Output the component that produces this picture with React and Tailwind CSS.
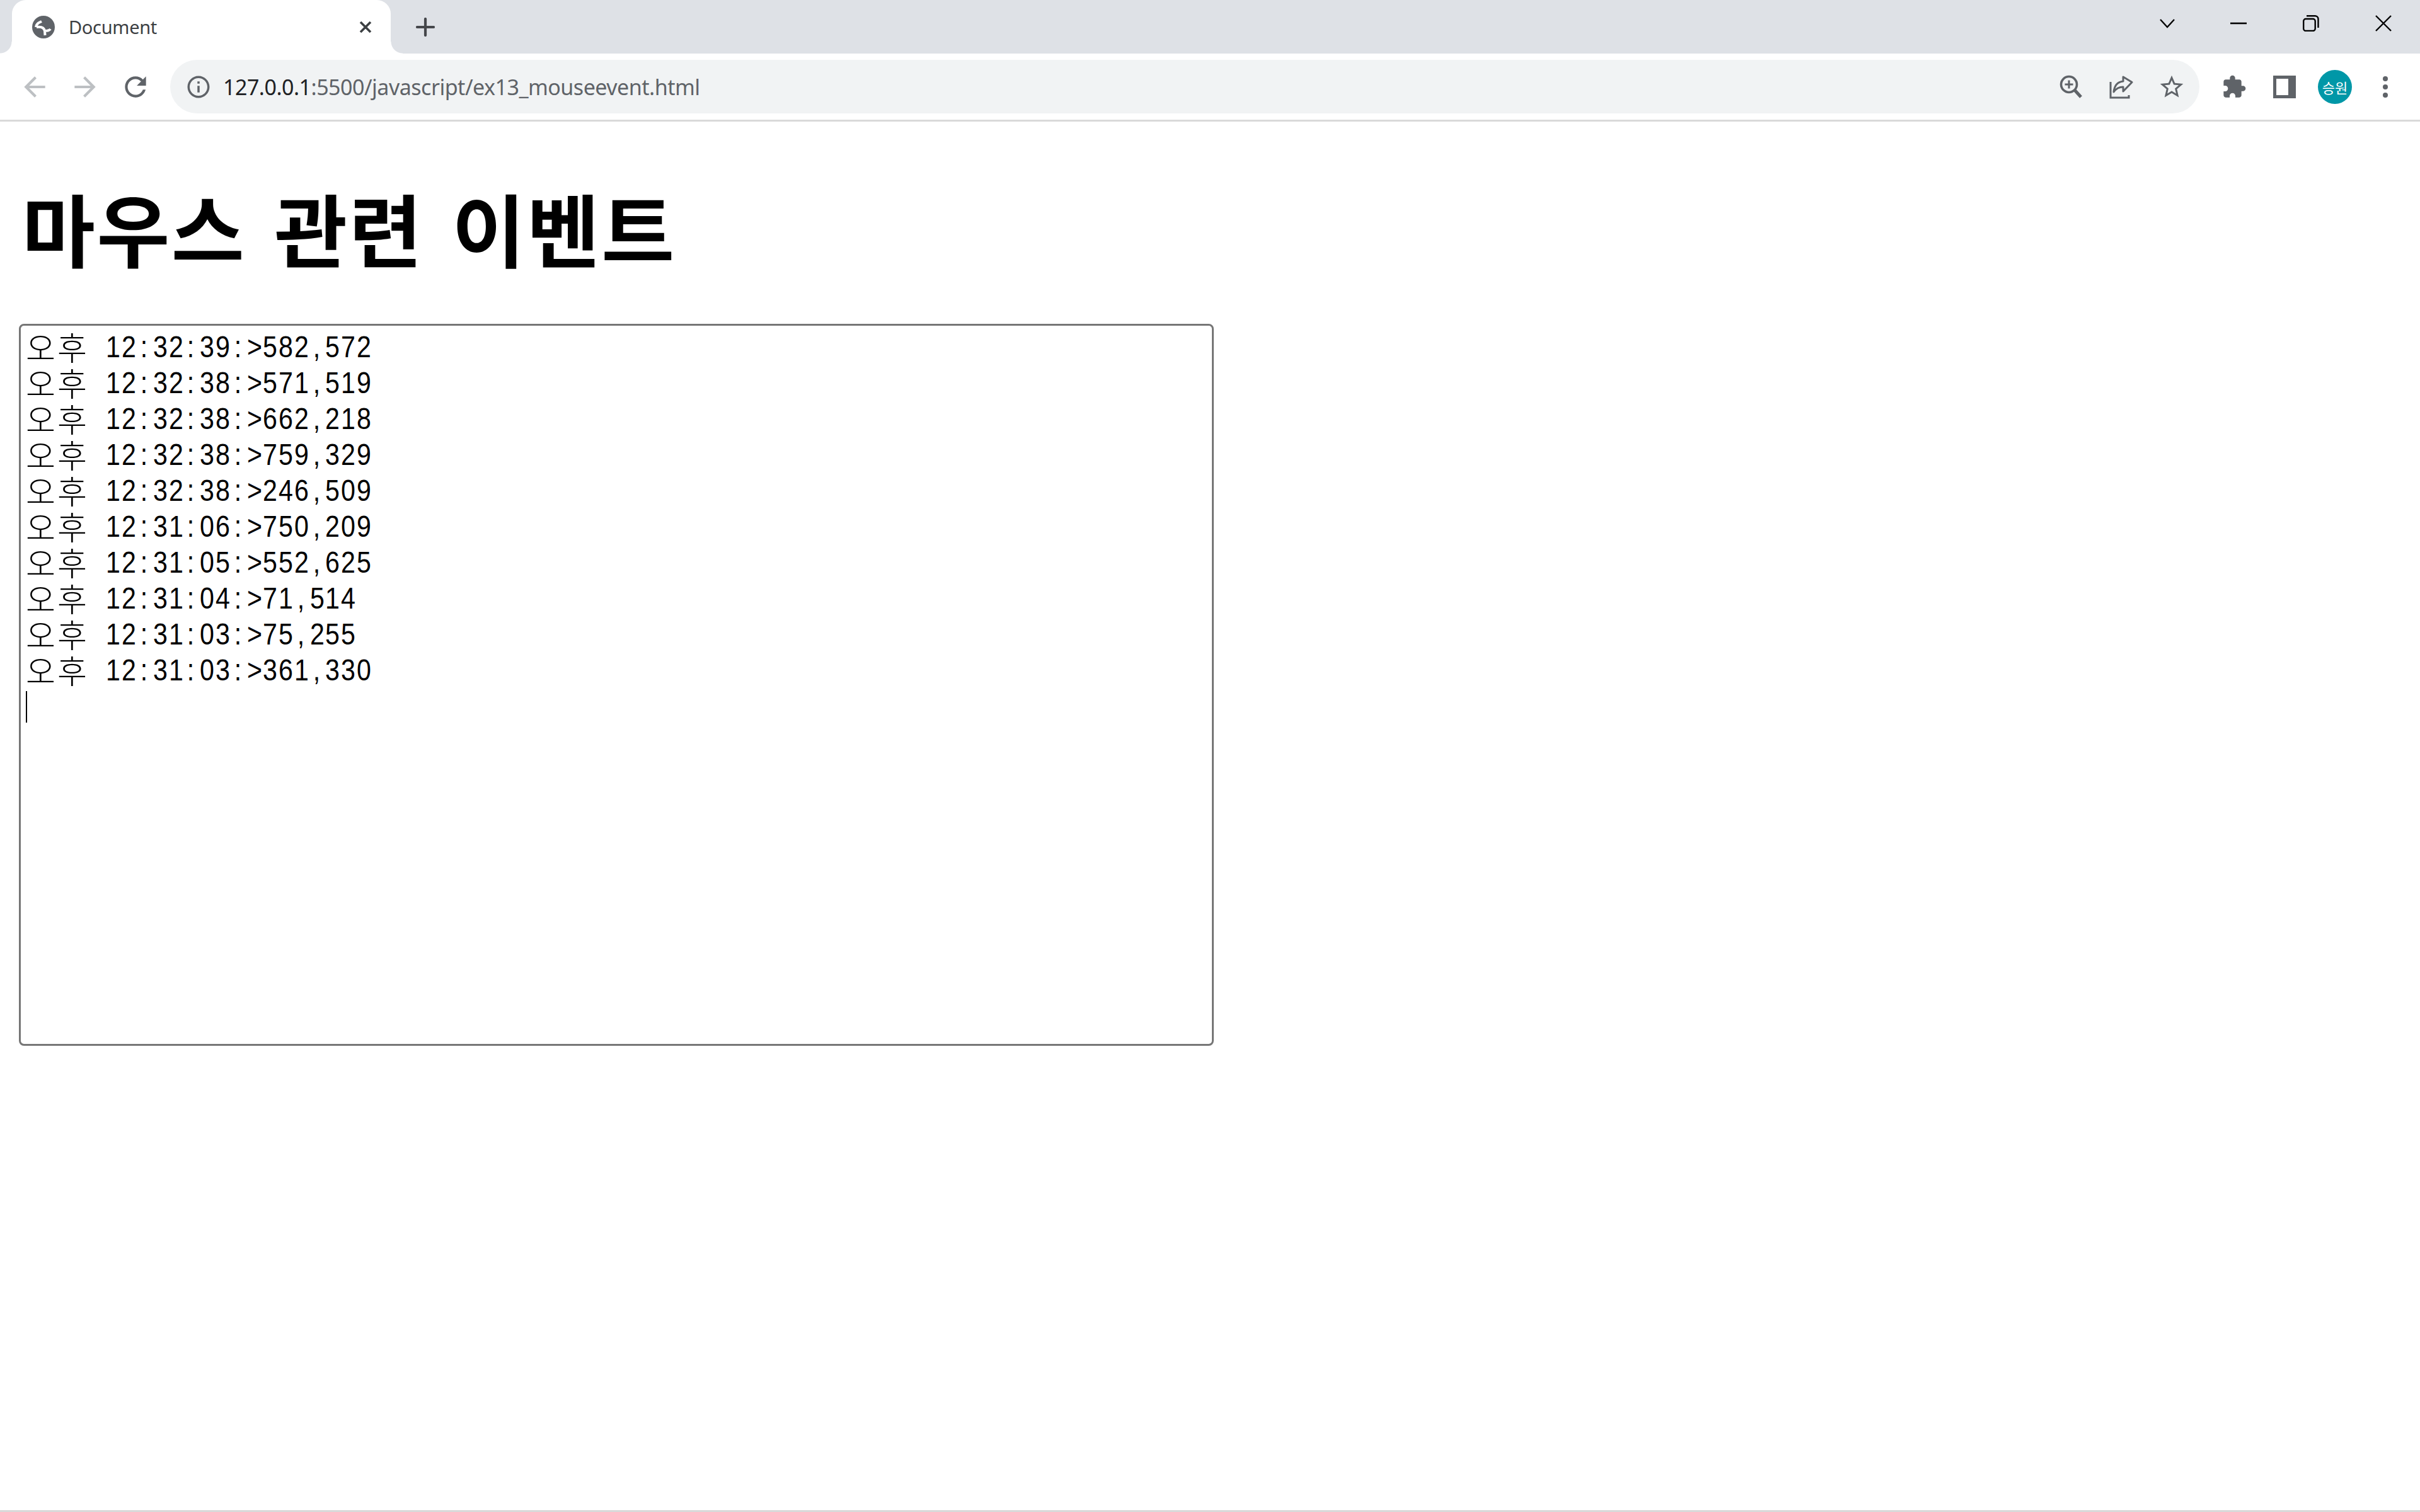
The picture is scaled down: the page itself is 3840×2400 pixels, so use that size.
const ic = {
  back: "M20 11H7.83l5.59-5.59L12 4l-8 8 8 8 1.41-1.41L7.83 13H20v-2z",
  forward: "M12 4l-1.41 1.41L16.17 11H4v2h12.17l-5.58 5.59L12 20l8-8z",
  reload: "M17.65 6.35C16.2 4.9 14.21 4 12 4c-4.42 0-7.99 3.58-7.99 8s3.57 8 7.99 8c3.73 0 6.84-2.55 7.73-6h-2.08c-.82 2.33-3.04 4-5.65 4-3.31 0-6-2.69-6-6s2.69-6 6-6c1.66 0 3.14.69 4.22 1.78L13 11h7V4l-2.35 2.35z",
  info: "M11 7h2v2h-2zm0 4h2v6h-2zm1-9C6.48 2 2 6.48 2 12s4.48 10 10 10 10-4.48 10-10S17.52 2 12 2zm0 18c-4.41 0-8-3.59-8-8s3.59-8 8-8 8 3.59 8 8-3.59 8-8 8z",
  star: "M22 9.24l-7.19-.62L12 2 9.19 8.63 2 9.24l5.46 4.73L5.82 21 12 17.27 18.18 21l-1.63-7.03L22 9.24zM12 15.4l-3.76 2.27 1-4.28-3.32-2.88 4.38-.38L12 6.1l1.71 4.04 4.38.38-3.32 2.88 1 4.28L12 15.4z",
  puzzle: "M20.5 11H19V7c0-1.1-.9-2-2-2h-4V3.5C13 2.12 11.88 1 10.5 1S8 2.12 8 3.5V5H4c-1.1 0-1.99.9-1.99 2v3.8H3.5c1.49 0 2.7 1.21 2.7 2.7s-1.21 2.7-2.7 2.7H2V20c0 1.1.9 2 2 2h3.8v-1.5c0-1.49 1.21-2.7 2.7-2.7 1.49 0 2.7 1.21 2.7 2.7V22H17c1.1 0 2-.9 2-2v-4h1.5c1.38 0 2.5-1.12 2.5-2.5S21.88 11 20.5 11z",
};

function Fill({ d, className }) {
  return (
    <svg viewBox="0 0 24 24" className={className} fill="currentColor">
      <path d={d} />
    </svg>
  );
}

const lines = [
  "12:32:39:>582,572",
  "12:32:38:>571,519",
  "12:32:38:>662,218",
  "12:32:38:>759,329",
  "12:32:38:>246,509",
  "12:31:06:>750,209",
  "12:31:05:>552,625",
  "12:31:04:>71,514",
  "12:31:03:>75,255",
  "12:31:03:>361,330",
];

export default function App() {
  return (
    <div className="w-[3840px] h-[2400px] flex flex-col bg-white font-['Noto_Sans',sans-serif] overflow-hidden">
      {/* tab strip */}
      <div className="relative h-[85px] shrink-0 flex bg-[#dee1e6] pl-[19px]">
        <div className="relative w-[601px] h-full bg-white rounded-t-[22px] flex items-center pl-[32px] pr-[30px]">
          <div className="absolute left-[-19px] bottom-0 w-[19px] h-[19px] bg-[radial-gradient(circle_at_0_0,#dee1e6_18px,#ffffff_19px)]" />
          <div className="absolute right-[-19px] bottom-0 w-[19px] h-[19px] bg-[radial-gradient(circle_at_100%_0,#dee1e6_18px,#ffffff_19px)]" />
          <svg viewBox="0 0 36 36" className="w-[36px] h-[36px]">
            <circle cx="18" cy="18" r="18" fill="#5f6368" />
            <path d="M6 18C7 12 11 11 15 9M7 18c7-1 12 1 13 6l.5 7M20 24c4 0 7 0 9-3" fill="none" stroke="#ffffff" strokeWidth="4" />
          </svg>
          <span className="ml-[22px] text-[29px] text-[#3c4043] leading-none tracking-[-0.3px]">Document</span>
          <svg viewBox="0 0 20 20" className="ml-auto w-[20px] h-[20px] text-[#3c4043]" fill="none" stroke="currentColor" strokeWidth="3.6">
            <path d="M2 2l16 16M18 2L2 18" />
          </svg>
        </div>
        <svg viewBox="0 0 30 30" className="ml-[40px] self-center w-[30px] h-[30px] text-[#45474b]" fill="none" stroke="currentColor" strokeWidth="4.2" strokeLinecap="round">
          <path d="M15 2v26M2 15h26" />
        </svg>
        <div className="ml-auto flex items-center pb-[11px] pr-[45px] text-black">
          <svg viewBox="0 0 24 16" className="w-[24px] h-[16px]" fill="none" stroke="currentColor" strokeWidth="2.4">
            <path d="M1 2l11 12L23 2" />
          </svg>
          <svg viewBox="0 0 26 4" className="ml-[88px] w-[26px] h-[4px]" fill="currentColor">
            <rect width="26" height="2.6" y="0.7" />
          </svg>
          <svg viewBox="0 0 26 26" className="ml-[89px] w-[26px] h-[26px]" fill="none" stroke="currentColor" strokeWidth="2.4">
            <rect x="1.2" y="6" width="18.5" height="19" rx="3.5" />
            <path d="M6 1.2h13.5a5 5 0 0 1 5 5V20" />
          </svg>
          <svg viewBox="0 0 26 26" className="ml-[89px] w-[26px] h-[26px]" fill="none" stroke="currentColor" strokeWidth="2.4">
            <path d="M1 1l24 24M25 1L1 25" />
          </svg>
        </div>
      </div>

      {/* toolbar */}
      <div className="h-[108px] shrink-0 flex items-start bg-white border-b-[3px] border-[#d9d9d9] pt-[10px] pl-[30px] pr-[350px]">
        <div className="h-[85px] flex items-center shrink-0">
          <Fill d={ic.back} className="w-[50px] h-[50px] text-[#bdc0c3]" />
          <Fill d={ic.forward} className="ml-[30px] w-[50px] h-[50px] text-[#bdc0c3]" />
          <Fill d={ic.reload} className="ml-[30px] w-[50px] h-[50px] text-[#5f6368]" />
        </div>
        <div className="ml-[30px] flex-1 h-[85px] rounded-full bg-[#f1f3f4] flex items-center pl-[24px] pr-[22px]">
          <Fill d={ic.info} className="w-[42px] h-[42px] text-[#5f6368]" />
          <span className="ml-[18px] text-[34px] leading-none tracking-[-0.5px] text-[#5f6368]">
            <span className="text-[#202124]">127.0.0.1</span>:5500/javascript/ex13_mouseevent.html
          </span>
          <svg viewBox="0 0 44 44" className="ml-auto w-[44px] h-[44px] text-[#5f6368]" fill="none" stroke="currentColor" strokeWidth="3.6">
            <circle cx="19" cy="18" r="12.5" />
            <path d="M19 11.5v13M12.5 18h13" strokeWidth="3" />
            <path d="M28 27l10 11" strokeWidth="5" />
          </svg>
          <svg viewBox="0 0 44 44" className="ml-[36px] w-[44px] h-[44px] text-[#5f6368]" fill="none" stroke="currentColor" strokeWidth="3">
            <path d="M5 14v25h29v-4" />
            <path d="M25 6v7c-9 1-14 7-15 17 4-6 9-8 15-8v7l14-14.500z" strokeLinejoin="round" />
          </svg>
          <Fill d={ic.star} className="ml-[36px] w-[44px] h-[44px] text-[#5f6368]" />
        </div>
        <div className="absolute left-[3525px] h-[85px] flex items-center">
          <Fill d={ic.puzzle} className="w-[40px] h-[40px] text-[#5f6368]" />
          <svg viewBox="0 0 36 36" className="ml-[42px] w-[36px] h-[36px]">
            <path d="M0 0h36v36H0zM5 5v26h19V5z" fill="#5f6368" fillRule="evenodd" />
          </svg>
          <div className="ml-[35px] w-[54px] h-[54px] rounded-full bg-[#0097a7] flex items-center justify-center text-white text-[22px] leading-none font-['Noto_Sans_CJK_KR',sans-serif]">
            승원
          </div>
          <svg viewBox="0 0 10 36" className="ml-[48px] w-[10px] h-[36px]" fill="#5f6368">
            <circle cx="5" cy="5" r="4" />
            <circle cx="5" cy="18" r="4" />
            <circle cx="5" cy="31" r="4" />
          </svg>
        </div>
      </div>

      {/* page */}
      <div className="flex-1 flex flex-col bg-white border-b-[3px] border-[#d9d9d9] pl-[30px]">
        <h1 className="mt-[87px] pl-[5px] text-[126px] leading-[160px] font-bold text-black tracking-[2.5px] [word-spacing:14px] font-['Noto_Sans_CJK_KR',sans-serif]">
          마우스 관련 이벤트
        </h1>
        <div className="mt-[74px] w-[1896px] h-[1146px] border-[3px] border-[#767676] rounded-[8px] pt-[3px] pl-[8px] text-black">
          {lines.map((t) => (
            <div key={t} className="h-[57px] leading-[57px] whitespace-pre flex items-center">
              <span className="w-[100px] shrink-0 pt-[3px] tracking-[3px] text-[51px] font-light font-['Noto_Sans_CJK_KR',sans-serif]">오후</span>
              <span className="ml-[25px] pt-[4px] flex text-[49px] font-['Liberation_Sans',sans-serif]">
                {t.split("").map((c, i) => (
                  <span key={i} className="w-[24.9px] shrink-0 text-center scale-x-[0.84]">{c}</span>
                ))}
              </span>
            </div>
          ))}
          <div className="w-[2px] h-[50px] bg-black mt-[7px]" />
        </div>
      </div>
    </div>
  );
}
